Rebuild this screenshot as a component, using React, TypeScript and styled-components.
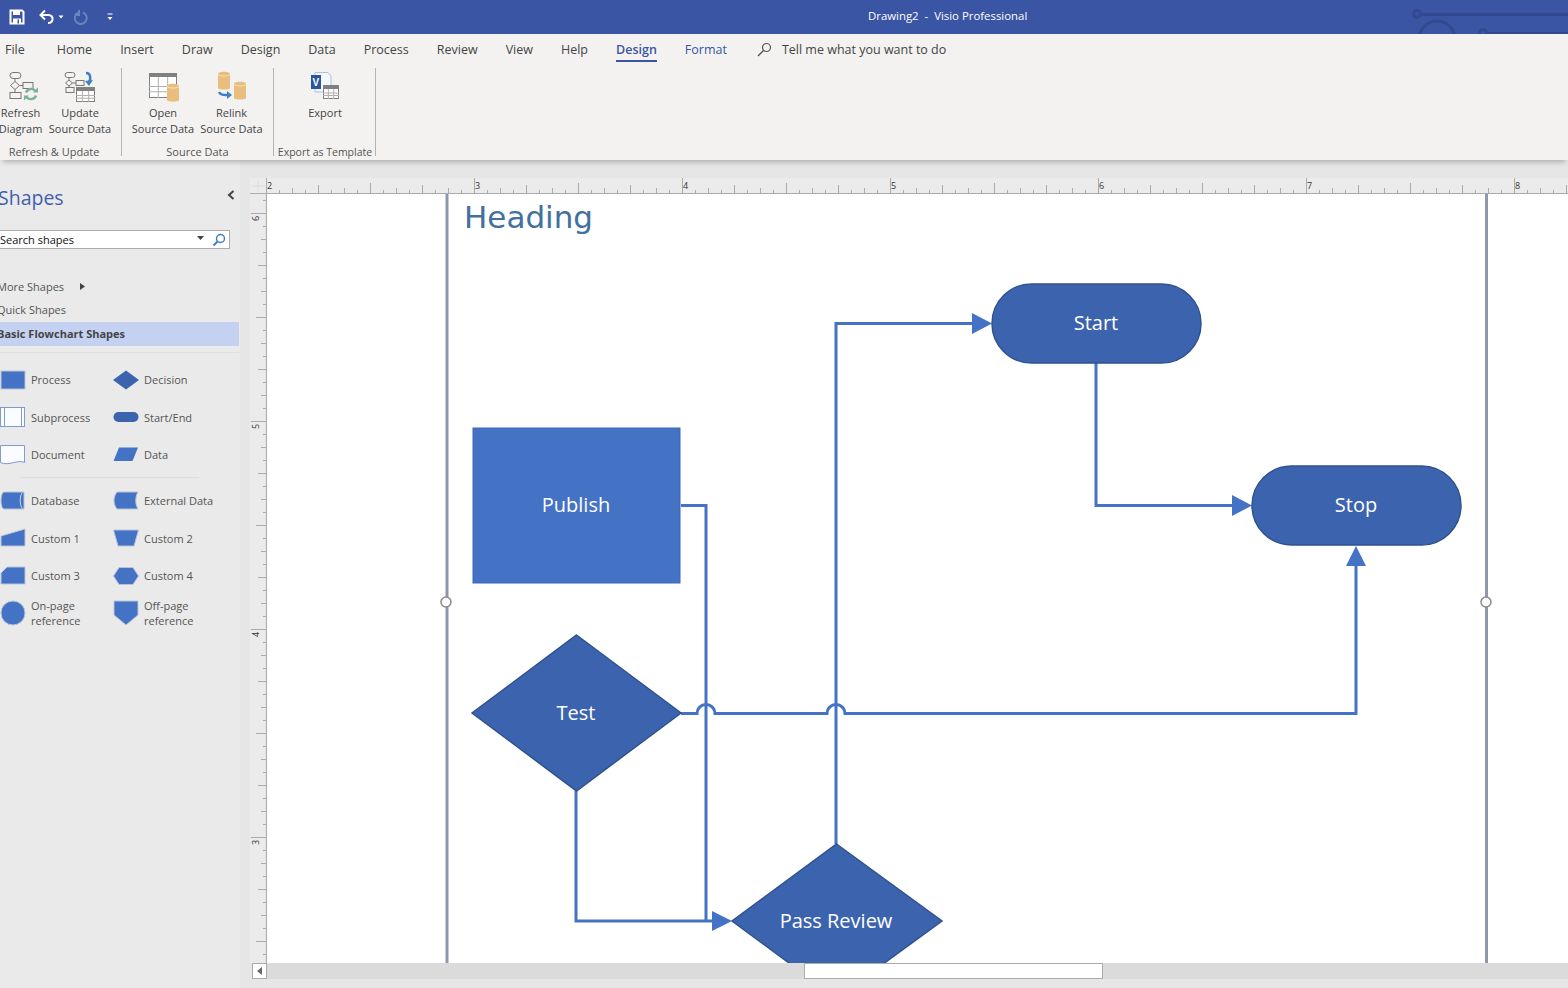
import styled, { createGlobalStyle } from 'styled-components';

const UI_FONT = '"Open Sans", "Noto Sans", "Liberation Sans", sans-serif';
const BLUE = '#4472c4';
const DARK_BLUE = '#3c64ae';
const EDGE = '#2f528f';

const GlobalStyle = createGlobalStyle`
  html, body {
    margin: 0;
    padding: 0;
    overflow: hidden;
    background: #e6e6e6;
  }
`;

const Window = styled.div`
  width: 1568px;
  height: 988px;
  display: flex;
  flex-direction: column;
  overflow: hidden;
  font-family: ${UI_FONT};
  color: #444;
`;

const TitleBar = styled.div`
  position: relative;
  height: 34px;
  flex: none;
  background: #3a55a3;
  display: flex;
  align-items: center;
  color: #fff;
`;

const QuickAccess = styled.div`
  display: flex;
  align-items: center;
  width: 868px;
  flex: none;
`;

const QatIcon = styled.svg<{ $w: number; $ml: number }>`
  width: ${(p) => p.$w}px;
  height: 16px;
  margin-left: ${(p) => p.$ml}px;
  flex: none;
`;

const TitleText = styled.div`
  font-size: 11.4px;
  white-space: pre;
  margin-top: -3px;
`;

const Watermark = styled.svg`
  position: absolute;
  right: 0;
  top: 0;
  width: 168px;
  height: 34px;
`;

const TabBar = styled.div`
  height: 34px;
  flex: none;
  background: #f3f2f1;
  display: flex;
  align-items: flex-start;
  gap: 28px;
  padding-left: 5px;
`;

const Tab = styled.div<{ $accent?: boolean; $current?: boolean }>`
  height: 28px;
  line-height: 32px;
  box-sizing: border-box;
  font-size: 12.5px;
  color: ${(p) => (p.$accent ? '#3a55a3' : '#444')};
  font-weight: ${(p) => (p.$current ? 600 : 400)};
  border-bottom: 2px solid ${(p) => (p.$current ? '#3a55a3' : 'transparent')};

  &:first-child {
    margin-right: 4px;
  }
`;

const TellMe = styled.div`
  display: flex;
  align-items: center;
  gap: 10px;
  height: 30px;
  margin-left: 2px;
  font-size: 12.5px;
  color: #444;
`;

const Ribbon = styled.div`
  position: relative;
  z-index: 2;
  height: 92px;
  flex: none;
  background: #f3f2f1;
  display: flex;
  box-shadow: 0 5px 5px -3px rgba(0, 0, 0, 0.25);
`;

const RibbonGroup = styled.div<{ $w: number }>`
  position: relative;
  width: ${(p) => p.$w}px;
  flex: none;
  box-sizing: border-box;
  display: flex;
  flex-direction: column;

  &::after {
    content: '';
    position: absolute;
    top: 0;
    right: 0;
    bottom: 4px;
    width: 1px;
    background: #b4b4b4;
  }
`;

const GroupButtons = styled.div<{ $pl: number }>`
  flex: 1;
  display: flex;
  align-items: flex-start;
  padding-left: ${(p) => p.$pl}px;
`;

const RibbonButton = styled.div<{ $w: number }>`
  width: ${(p) => p.$w}px;
  flex: none;
  display: flex;
  flex-direction: column;
  align-items: center;
  font-size: 11px;
  line-height: 16px;
  text-align: center;
  white-space: nowrap;
  color: #444;
`;

const RibbonIcon = styled.svg`
  width: 40px;
  height: 37px;
  margin-bottom: 0;
  flex: none;
`;

const GroupLabel = styled.div<{ $shift?: number; $size?: number }>`
  height: 16px;
  line-height: 16px;
  font-size: ${(p) => p.$size ?? 11}px;
  text-align: center;
  white-space: nowrap;
  color: #555;
  margin-left: ${(p) => p.$shift ?? 0}px;
`;

const Main = styled.div`
  flex: 1;
  min-height: 0;
  display: flex;
`;

const Sidebar = styled.div`
  width: 240px;
  flex: none;
  background: #eaeaea;
  overflow: hidden;
  display: flex;
  flex-direction: column;
`;

const SidebarHead = styled.div`
  height: 70px;
  flex: none;
  box-sizing: border-box;
  padding: 22px 5px 0 0;
  display: flex;
  justify-content: space-between;
  align-items: flex-start;
`;

const SidebarTitle = styled.div`
  font-size: 19.5px;
  line-height: 32px;
  margin-left: -2px;
  color: #3f5fae;
`;

const Collapse = styled.svg`
  width: 8px;
  height: 10px;
  margin-top: 8px;
`;

const SearchBox = styled.div`
  width: 230px;
  height: 19px;
  flex: none;
  box-sizing: border-box;
  background: #fff;
  border: 1px solid #ababab;
  border-left: none;
  display: flex;
  align-items: center;
  font-size: 11px;
  line-height: 15px;
  color: #111;
`;

const SearchText = styled.div`
  flex: 1;
  margin-top: -1px;
`;

const Caret = styled.svg`
  width: 7px;
  height: 4px;
  margin-right: 8px;
  margin-top: -3px;
`;

const SearchGlass = styled.svg`
  width: 14px;
  height: 14px;
  margin-right: 3px;
`;

const NavList = styled.div`
  margin-top: 26px;
  display: flex;
  flex-direction: column;
  padding-bottom: 6px;
  border-bottom: 1px solid #e0e0e0;
  width: 239px;
`;

const NavItem = styled.div<{ $active?: boolean }>`
  height: 24px;
  line-height: 24px;
  font-size: 11px;
  margin-top: ${(p) => (p.$active ? '0' : '-0.5px')};
  padding-left: 0;
  text-indent: -3px;
  display: flex;
  align-items: center;
  white-space: nowrap;
  color: ${(p) => (p.$active ? '#444' : '#555')};
  font-weight: ${(p) => (p.$active ? 700 : 400)};
  background: ${(p) => (p.$active ? '#c5d1f1' : 'transparent')};
`;

const NavArrow = styled.svg`
  width: 5px;
  height: 7px;
  margin-left: 16px;
`;

const StencilGrid = styled.div<{ $mt: number }>`
  display: grid;
  grid-template-columns: 113px 113px;
  grid-auto-rows: 37.4px;
  margin-top: ${(p) => p.$mt}px;
`;

const StencilItem = styled.div`
  display: flex;
  align-items: center;
  gap: 5px;
  font-size: 11px;
  line-height: 15px;
  color: #555;
  white-space: nowrap;
`;

const StencilIcon = styled.svg`
  width: 26px;
  height: 26px;
  flex: none;
`;

const StencilRule = styled.div`
  width: 179px;
  height: 1px;
  margin: 4px 0 4px 20px;
  background: #dedede;
`;

const Workspace = styled.div`
  flex: 1;
  min-width: 0;
  padding: 18px 0 0 10px;
  display: flex;
  flex-direction: column;
`;

const TopRuler = styled.svg`
  width: 1318px;
  height: 16px;
  flex: none;
  display: block;
`;

const CanvasRow = styled.div`
  height: 769px;
  flex: none;
  display: flex;
`;

const SideRuler = styled.svg`
  width: 17px;
  height: 769px;
  flex: none;
  display: block;
`;

const Page = styled.svg`
  width: 1301px;
  height: 769px;
  flex: none;
  display: block;
  background: #fff;
`;

const ScrollRow = styled.div`
  height: 16px;
  flex: none;
  display: flex;
  align-items: stretch;
  padding-left: 2px;
`;

const ScrollButton = styled.div`
  width: 15px;
  flex: none;
  box-sizing: border-box;
  background: #fff;
  border: 1px solid #ababab;
  display: flex;
  align-items: center;
  justify-content: center;
`;

const ScrollTrack = styled.div`
  flex: 1;
  background: #dbdbdb;
  padding-left: 537px;
`;

const ScrollThumb = styled.div`
  width: 299px;
  height: 100%;
  box-sizing: border-box;
  background: #fff;
  border: 1px solid #ababab;
`;

const ShapeLabel = styled.text`
  font-family: ${UI_FONT};
  font-size: 20px;
  fill: #fff;
  text-anchor: middle;
`;

const Heading = styled.text`
  font-family: "DejaVu Sans", sans-serif;
  font-size: 31px;
  fill: #41719c;
`;

const RulerDigit = styled.text`
  font-family: ${UI_FONT};
  font-size: 9px;
  fill: #333;
`;

const tabs = ['File', 'Home', 'Insert', 'Draw', 'Design', 'Data', 'Process', 'Review', 'View', 'Help'];

const inchTick = (i: number) => {
  if (i % 16 === 0) return 16;
  if (i % 8 === 0) return 11;
  if (i % 4 === 0) return 9;
  if (i % 2 === 0) return 6;
  return 4;
};

const TopRulerDrawing = () => {
  const ticks = [];
  for (let i = 0; 267 + i * 13 < 1568; i++) ticks.push(i);
  return (
    <TopRuler viewBox="250 178 1318 16">
      <rect x="250" y="178" width="1318" height="16" fill="#ebebeb" />
      <path d="M258 180v12M251 186h14" stroke="#dcdcdc" strokeWidth="1" fill="none" />
      <path d="M250 193.5h1318" stroke="#ababab" strokeWidth="1.2" />
      {ticks.map((i) => {
        const x = 266.5 + i * 13;
        return <path key={i} d={`M${x} 194v-${inchTick(i)}`} stroke="#ababab" strokeWidth="1" />;
      })}
      {[2, 3, 4, 5, 6, 7, 8].map((n, i) => (
        <RulerDigit key={n} x={267 + i * 208} y={189}>
          {n}
        </RulerDigit>
      ))}
    </TopRuler>
  );
};

const SideRulerDrawing = () => {
  const ticks = [];
  for (let i = -1; 213.5 + i * 13 < 963; i++) ticks.push(i);
  return (
    <SideRuler viewBox="250 194 17 769">
      <rect x="250" y="194" width="17" height="769" fill="#ebebeb" />
      <path d="M266.5 194v769" stroke="#ababab" strokeWidth="1.2" />
      {ticks.map((i) => {
        const y = 213.5 + i * 13;
        const len = i < 0 ? 4 : inchTick(i);
        return <path key={i} d={`M267 ${y}h-${len}`} stroke="#ababab" strokeWidth="1" />;
      })}
      {[6, 5, 4, 3].map((n, i) => {
        const y = 221 + i * 208;
        return (
          <RulerDigit key={n} x={259} y={y} transform={`rotate(-90 259 ${y})`}>
            {n}
          </RulerDigit>
        );
      })}
    </SideRuler>
  );
};

const Diagram = () => (
  <Page viewBox="267 194 1301 769">
    <path d="M447 194v769M1486.5 194v769" stroke="#9097ab" strokeWidth="3" fill="none" />
    <circle cx="446" cy="602" r="5" fill="#fff" stroke="#8a8a8a" strokeWidth="1.5" />
    <circle cx="1486" cy="602" r="5" fill="#fff" stroke="#8a8a8a" strokeWidth="1.5" />
    <Heading x="464" y="228">
      Heading
    </Heading>

    <g fill="none" stroke={BLUE} strokeWidth="3">
      <path d="M681 505.5h25V921" />
      <path d="M576 791V921H714" />
      <path d="M681 713.5H697A9 9 0 0 1 715 713.5H827A9 9 0 0 1 845 713.5H1356V564" />
      <path d="M836 844V323.5H974" />
      <path d="M1096 363V505.5H1234" />
    </g>
    <g fill={BLUE}>
      <path d="M712 911L732 921L712 931Z" />
      <path d="M972 313L992 323.5L972 334Z" />
      <path d="M1232 495L1252 505.5L1232 516Z" />
      <path d="M1346 566L1356 546L1366 566Z" />
    </g>

    <rect x="473" y="428" width="207" height="155" fill={BLUE} stroke="#3f68b5" />
    <ShapeLabel x="576" y="512">
      Publish
    </ShapeLabel>
    <path d="M576.5 635L681 713L576.5 791L472 713Z" fill={DARK_BLUE} stroke={EDGE} strokeWidth="1.5" />
    <ShapeLabel x="576" y="720">
      Test
    </ShapeLabel>
    <rect x="992" y="284" width="209" height="79" rx="39.5" fill={DARK_BLUE} stroke={EDGE} strokeWidth="1.5" />
    <ShapeLabel x="1096" y="330">
      Start
    </ShapeLabel>
    <rect x="1252" y="466" width="209" height="79" rx="39.5" fill={DARK_BLUE} stroke={EDGE} strokeWidth="1.5" />
    <ShapeLabel x="1356" y="512">
      Stop
    </ShapeLabel>
    <path d="M836.5 844L942 921L836.5 998L732 921Z" fill={DARK_BLUE} stroke={EDGE} strokeWidth="1.5" />
    <ShapeLabel x="836" y="928">
      Pass Review
    </ShapeLabel>
  </Page>
);

const stencilEdge = '#b9c4d9';

const stencilShapes: Record<string, React.ReactNode> = {
  process: <rect x="1" y="4" width="24" height="18" fill={BLUE} stroke={stencilEdge} />,
  decision: <path d="M13 3.5L26 13L13 22.5L0 13Z" fill={DARK_BLUE} />,
  subprocess: (
    <g fill="#fbfcff" stroke="#7f9bd0" strokeWidth="1">
      <rect x="0.5" y="3.5" width="24" height="19" />
      <path d="M4.5 3.5v19M21.5 3.5v19" />
    </g>
  ),
  startend: <rect x="0.5" y="8" width="25" height="10" rx="5" fill={DARK_BLUE} />,
  document: <path d="M0.5 4.5H24.5V21.5C18 18 9 25.5 0.5 21.5Z" fill="#fbfcff" stroke="#7f9bd0" />,
  data: <path d="M6 6.5H25L19.5 20H0.5Z" fill={BLUE} />,
  database: (
    <g>
      <path d="M4 4H24V21H4C0 21 0 4 4 4Z" fill={BLUE} stroke={stencilEdge} />
      <path d="M22.5 4.5C19.5 7 19.5 18 22.5 20.5" fill="none" stroke="#cdd7ea" />
    </g>
  ),
  external: <path d="M4 4H25C22 9 22 16 25 21H4C0 16 0 9 4 4Z" fill={BLUE} stroke={stencilEdge} />,
  custom1: <path d="M1 11L25 4V21H1Z" fill={BLUE} stroke={stencilEdge} />,
  custom2: <path d="M0.5 5H25.5L21 21H5Z" fill={BLUE} stroke={stencilEdge} />,
  custom3: <path d="M7 4H25V21H1V10Z" fill={BLUE} stroke={stencilEdge} />,
  custom4: <path d="M6 4.5H20L25.5 13L20 21.5H6L0.5 13Z" fill={BLUE} stroke={stencilEdge} />,
  onpage: <circle cx="13" cy="13" r="12" fill={BLUE} stroke={stencilEdge} />,
  offpage: <path d="M1 1H25V15L13 25L1 15Z" fill={BLUE} stroke={stencilEdge} />,
};

const basicStencils = [
  ['process', 'Process'],
  ['decision', 'Decision'],
  ['subprocess', 'Subprocess'],
  ['startend', 'Start/End'],
  ['document', 'Document'],
  ['data', 'Data'],
];

const moreStencils = [
  ['database', 'Database'],
  ['external', 'External Data'],
  ['custom1', 'Custom 1'],
  ['custom2', 'Custom 2'],
  ['custom3', 'Custom 3'],
  ['custom4', 'Custom 4'],
];

const StencilEntry = ({ shape, children }: { shape: string; children: React.ReactNode }) => (
  <StencilItem>
    <StencilIcon viewBox="0 0 26 26">{stencilShapes[shape]}</StencilIcon>
    <div>{children}</div>
  </StencilItem>
);

const FlowSymbols = ({ x, small }: { x: number; small?: boolean }) =>
  small ? (
    <g fill="none" stroke="#777" strokeWidth="1">
      <rect x={x} y="72.5" width="10" height="5" rx="2.5" />
      <path d={`M${x + 4} 80L${x + 7.5} 83L${x + 4} 86L${x + 0.5} 83Z`} />
      <rect x={x + 11} y="80.5" width="8" height="5" />
      <rect x={x + 1} y="87.5" width="8" height="5" />
      <path d={`M${x + 7.5} 83H${x + 11}M${x + 4} 77.5V80M${x + 4} 86V87.5`} />
    </g>
  ) : (
    <g fill="none" stroke="#777" strokeWidth="1">
      <rect x={x} y="72.5" width="11" height="6" rx="3" />
      <path d={`M${x + 5} 81.5L${x + 9.5} 85.5L${x + 5} 89.5L${x + 0.5} 85.5Z`} />
      <rect x={x + 13} y="82.5" width="10" height="6" />
      <rect x={x} y="92.5" width="11" height="6" />
      <path d={`M${x + 9.5} 85.5H${x + 13}M${x + 5} 78.5V81.5M${x + 5} 89.5V92.5`} />
    </g>
  );

const MiniTable = ({ x, y, w, h }: { x: number; y: number; w: number; h: number }) => (
  <g>
    <rect x={x + 0.5} y={y + 0.5} width={w - 1} height={h - 1} fill="#fff" stroke="#808080" />
    <rect x={x} y={y} width={w} height={4} fill="#808080" />
    <path
      d={`M${x} ${y + (h * 2) / 4 + 1}H${x + w}M${x} ${y + (h * 3) / 4}H${x + w}M${x + w / 3} ${y + 4}V${y + h}M${x + (w * 2) / 3} ${y + 4}V${y + h}`}
      stroke="#b0b0b0"
      fill="none"
    />
  </g>
);

const Barrel = ({ x, y, h }: { x: number; y: number; h: number }) => (
  <g>
    <path
      d={`M${x} ${y + 2}C${x} ${y - 1} ${x + 12} ${y - 1} ${x + 12} ${y + 2}V${y + h - 1}C${x + 12} ${y + h + 1} ${x} ${y + h + 1} ${x} ${y + h - 1}Z`}
      fill="#e8bd7d"
    />
    <path d={`M${x} ${y + 2.5}C${x + 2} ${y + 4.5} ${x + 10} ${y + 4.5} ${x + 12} ${y + 2.5}`} stroke="#f6e3bf" fill="none" />
  </g>
);

const App = () => (
  <>
    <GlobalStyle />
    <Window>
      <TitleBar>
        <QuickAccess>
          <QatIcon $w={16} $ml={9} viewBox="0 0 16 16">
            <path d="M1.5 1.5H13L14.5 3V14.5H1.5Z" fill="none" stroke="#fff" strokeWidth="2" />
            <rect x="4" y="2" width="7" height="4" fill="#fff" />
            <rect x="4" y="9.5" width="8" height="5" fill="#fff" />
            <rect x="8.5" y="10.5" width="1.5" height="4" fill="#3a55a3" />
          </QatIcon>
          <QatIcon $w={15} $ml={14} viewBox="0 0 15 16">
            <path d="M2 6H9.5C15 6 15 14 9 14" fill="none" stroke="#fff" strokeWidth="2" />
            <path d="M6 1.5L1.5 6L6 10.5" fill="none" stroke="#fff" strokeWidth="2" />
          </QatIcon>
          <QatIcon $w={6} $ml={4} viewBox="0 0 6 16">
            <path d="M0.5 6.5H5.5L3 9.5Z" fill="#fff" />
          </QatIcon>
          <QatIcon $w={14} $ml={10} viewBox="0 0 14 16">
            <path d="M9 3.5A6 6 0 1 1 4.5 3.5M5 1V6H0.5" fill="none" stroke="#6a83bd" strokeWidth="2" />
          </QatIcon>
          <QatIcon $w={6} $ml={19} viewBox="0 0 6 16">
            <path d="M0.5 4.5H5.5V5.5H0.5ZM0.5 8H5.5L3 11Z" fill="#fff" />
          </QatIcon>
        </QuickAccess>
        <TitleText>{'Drawing2  -  Visio Professional'}</TitleText>
        <Watermark viewBox="1400 0 168 34">
          <g fill="none" stroke="#33498f" strokeWidth="3">
            <circle cx="1417" cy="14" r="3.5" />
            <path d="M1421 14.5H1568" />
            <circle cx="1437" cy="39" r="18" />
            <circle cx="1483" cy="33" r="3.5" />
            <path d="M1487 33.5H1568" />
          </g>
        </Watermark>
      </TitleBar>

      <TabBar>
        {tabs.map((t) => (
          <Tab key={t}>{t}</Tab>
        ))}
        <Tab $accent $current>
          Design
        </Tab>
        <Tab $accent>Format</Tab>
        <TellMe>
          <svg width="15" height="15" viewBox="0 0 15 15">
            <circle cx="9.5" cy="5.5" r="4" fill="none" stroke="#555" strokeWidth="1.2" />
            <path d="M6.5 8.5L1 14" stroke="#555" strokeWidth="1.4" />
          </svg>
          <span>Tell me what you want to do</span>
        </TellMe>
      </TabBar>

      <Ribbon>
        <RibbonGroup $w={122}>
          <GroupButtons $pl={0}>
            <RibbonButton $w={41}>
              <RibbonIcon viewBox="0 68 40 37">
                <FlowSymbols x={9} />
                <g fill="none" stroke="#7fb09a" strokeWidth="2.4">
                  <path d="M25 92.5A5.5 5.5 0 0 1 34.5 91" />
                  <path d="M35 95.5A5.5 5.5 0 0 1 25.5 97" />
                </g>
                <path d="M32 92.5H37V87.5ZM28 95.5H23V100.5Z" fill="#7fb09a" />
              </RibbonIcon>
              <span>Refresh</span>
              <span>Diagram</span>
            </RibbonButton>
            <RibbonButton $w={78}>
              <RibbonIcon viewBox="61 68 40 37">
                <FlowSymbols x={66} small />
                <path d="M87 73C92 73 92 79 90 82" fill="none" stroke="#3f7fc4" strokeWidth="2.5" />
                <path d="M86 81L94 80L90 86Z" fill="#3f7fc4" />
                <MiniTable x={77} y={87} w={19} h={15} />
              </RibbonIcon>
              <span>Update</span>
              <span>Source Data</span>
            </RibbonButton>
          </GroupButtons>
          <GroupLabel $shift={-14}>{'Refresh & Update'}</GroupLabel>
        </RibbonGroup>

        <RibbonGroup $w={152}>
          <GroupButtons $pl={7}>
            <RibbonButton $w={68}>
              <RibbonIcon viewBox="144 68 40 37">
                <MiniTable x={150} y={73} w={28} h={25} />
                <Barrel x={168} y={84} h={17} />
              </RibbonIcon>
              <span>Open</span>
              <span>Source Data</span>
            </RibbonButton>
            <RibbonButton $w={69}>
              <RibbonIcon viewBox="212 68 40 37">
                <Barrel x={218} y={72} h={17} />
                <Barrel x={234} y={82} h={17} />
                <path d="M219 92C221 96 225 95 228 95" fill="none" stroke="#3f7fc4" strokeWidth="2.5" />
                <path d="M227 91L232 95L227 99Z" fill="#3f7fc4" />
              </RibbonIcon>
              <span>Relink</span>
              <span>Source Data</span>
            </RibbonButton>
          </GroupButtons>
          <GroupLabel $shift={-1}>Source Data</GroupLabel>
        </RibbonGroup>

        <RibbonGroup $w={102}>
          <GroupButtons $pl={0}>
            <RibbonButton $w={102}>
              <RibbonIcon viewBox="305 68 40 37">
                <path d="M315 72.5H328L331 76V92H315Z" fill="#f4f7fc" stroke="#a9c0e4" />
                <rect x="311" y="75" width="10" height="14" fill="#2b579a" />
                <text x="312.5" y="86" fontSize="10" fontWeight="700" fill="#fff" fontFamily='"Liberation Sans", sans-serif'>
                  V
                </text>
                <MiniTable x={323} y={85} w={16} h={14} />
              </RibbonIcon>
              <span>Export</span>
            </RibbonButton>
          </GroupButtons>
          <GroupLabel $size={10.5}>Export as Template</GroupLabel>
        </RibbonGroup>
      </Ribbon>

      <Main>
        <Sidebar>
          <SidebarHead>
            <SidebarTitle>Shapes</SidebarTitle>
            <Collapse viewBox="0 0 8 10">
              <path d="M6.5 1L2 5L6.5 9" fill="none" stroke="#444" strokeWidth="2" />
            </Collapse>
          </SidebarHead>
          <SearchBox>
            <SearchText>Search shapes</SearchText>
            <Caret viewBox="0 0 7 4">
              <path d="M0 0H7L3.5 4Z" fill="#444" />
            </Caret>
            <SearchGlass viewBox="0 0 14 14">
              <circle cx="8.5" cy="5.5" r="4" fill="none" stroke="#3f7fc4" strokeWidth="1.5" />
              <path d="M5.5 8.5L1.5 12.5" stroke="#3f7fc4" strokeWidth="2" />
            </SearchGlass>
          </SearchBox>
          <NavList>
            <NavItem>
              More Shapes
              <NavArrow viewBox="0 0 5 7">
                <path d="M0 0L5 3.5L0 7Z" fill="#444" />
              </NavArrow>
            </NavItem>
            <NavItem>Quick Shapes</NavItem>
            <NavItem $active>Basic Flowchart Shapes</NavItem>
          </NavList>

          <StencilGrid $mt={8}>
            {basicStencils.map(([shape, label]) => (
              <StencilEntry key={shape} shape={shape}>
                {label}
              </StencilEntry>
            ))}
          </StencilGrid>
          <StencilRule />
          <StencilGrid $mt={0}>
            {moreStencils.map(([shape, label]) => (
              <StencilEntry key={shape} shape={shape}>
                {label}
              </StencilEntry>
            ))}
            <StencilEntry shape="onpage">
              On-page
              <br />
              reference
            </StencilEntry>
            <StencilEntry shape="offpage">
              Off-page
              <br />
              reference
            </StencilEntry>
          </StencilGrid>
        </Sidebar>

        <Workspace>
          <TopRulerDrawing />
          <CanvasRow>
            <SideRulerDrawing />
            <Diagram />
          </CanvasRow>
          <ScrollRow>
            <ScrollButton>
              <svg width="6" height="8" viewBox="0 0 6 8">
                <path d="M5 0V8L0 4Z" fill="#666" />
              </svg>
            </ScrollButton>
            <ScrollTrack>
              <ScrollThumb />
            </ScrollTrack>
          </ScrollRow>
        </Workspace>
      </Main>
    </Window>
  </>
);

export default App;
